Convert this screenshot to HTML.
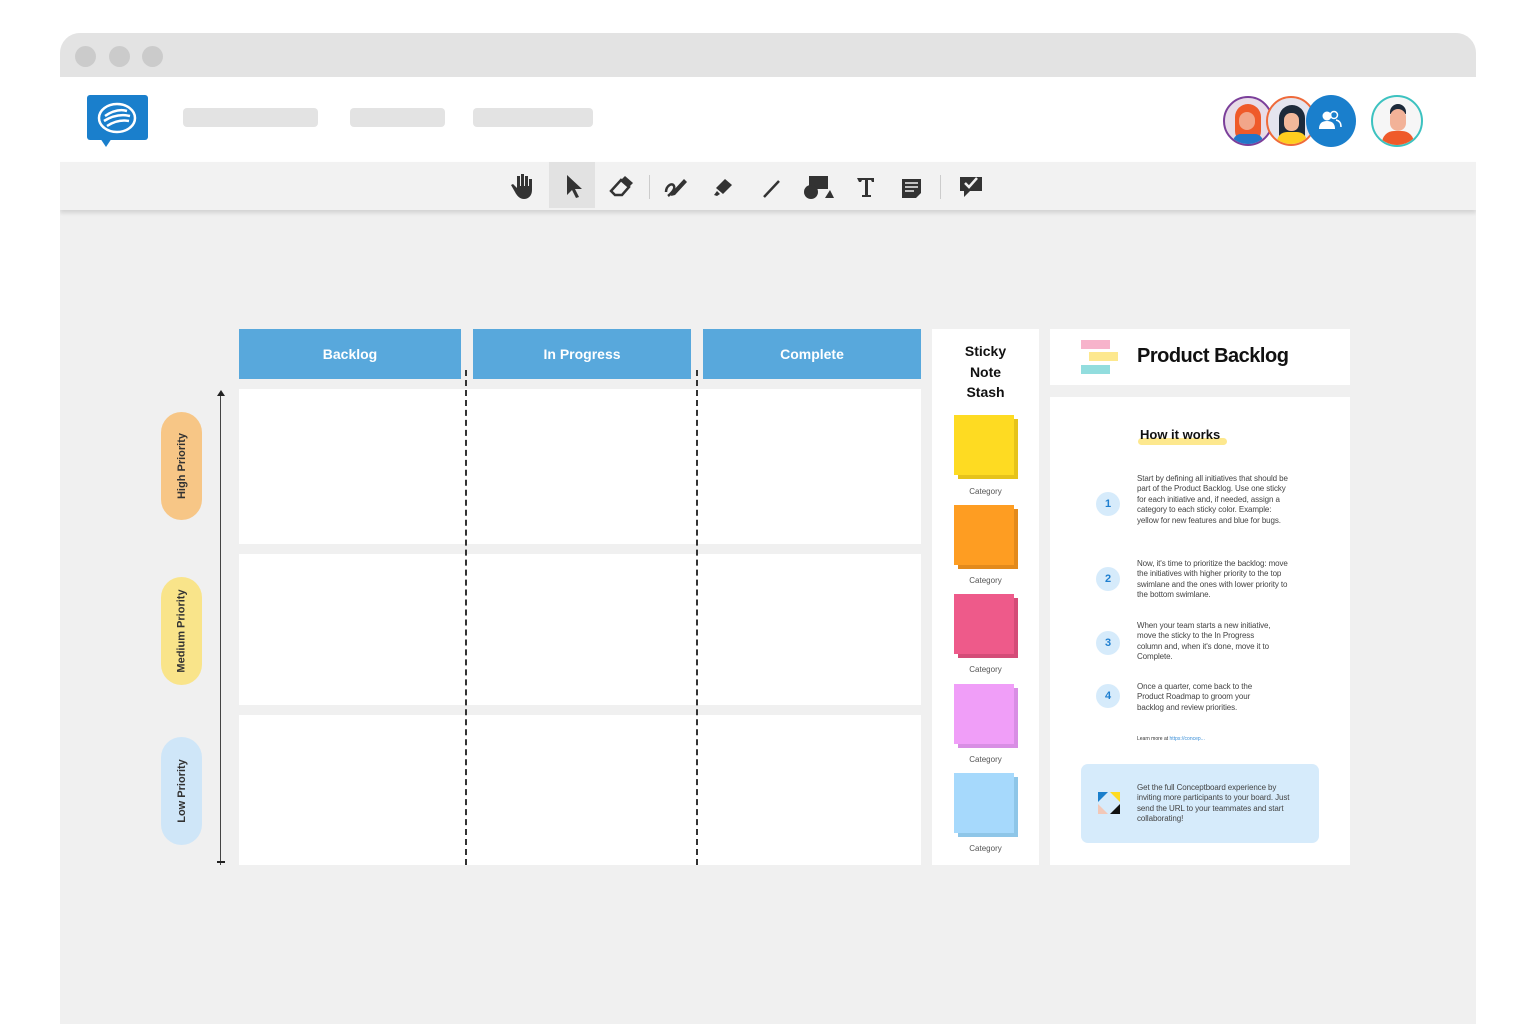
<!DOCTYPE html>
<html><head><meta charset="utf-8"><style>
*{margin:0;padding:0;box-sizing:border-box}
body{width:1536px;height:1024px;background:#fff;position:relative;overflow:hidden;font-family:"Liberation Sans",sans-serif}
.a{position:absolute}
.hand{font-family:"Comic Sans MS","Liberation Sans",sans-serif;font-weight:bold}
.col{background:#58a8dc;color:#fff;font-size:14px;display:flex;align-items:center;justify-content:center;top:329px;height:50px}
.row{background:#fff;left:239px;width:682px}
.dash{width:0;border-left:2px dashed #333;top:370px;height:495px}
.pill{left:161px;width:41px;border-radius:21px;display:flex;align-items:center;justify-content:center}
.pill span{transform:rotate(-90deg);white-space:nowrap;font-size:11px;color:#333}
.note{left:954px;width:64px;height:64px}
.note div{position:absolute}
.cat{left:932px;width:107px;text-align:center;font-size:8px;color:#555}
.num{left:1096px;width:24px;height:24px;border-radius:12px;background:#d6ebfb;color:#1f7fd0;font-size:11px;font-weight:bold;display:flex;align-items:center;justify-content:center}
.txt{left:1137px;font-size:8px;line-height:10.4px;color:#444;width:152px;letter-spacing:-0.1px}
.bar{background:#e3e3e3;border-radius:4px;top:108px;height:19px}
</style></head><body>
<div class="a" style="left:60px;top:33px;width:1416px;height:991px;background:#f0f0f0;border-radius:20px 20px 0 0;overflow:hidden">
 <div class="a" style="left:0;top:0;width:100%;height:44px;background:#e3e3e3"></div>
 <div class="a" style="left:15px;top:13px;width:21px;height:21px;border-radius:50%;background:#cbcbcb"></div>
 <div class="a" style="left:49px;top:13px;width:21px;height:21px;border-radius:50%;background:#cbcbcb"></div>
 <div class="a" style="left:82px;top:13px;width:21px;height:21px;border-radius:50%;background:#cbcbcb"></div>
 <div class="a" style="left:0;top:44px;width:100%;height:85px;background:#fff"></div>
 <div class="a" style="left:0;top:129px;width:100%;height:48px;background:#f2f2f2;box-shadow:0 3px 4px rgba(0,0,0,.12)"></div>
</div>
<div class="a" style="left:87px;top:95px;width:61px;height:45px;background:#1a7fcc;border-radius:3px"></div>
<div class="a" style="left:100px;top:138px;width:0;height:0;border-left:6px solid transparent;border-right:6px solid transparent;border-top:9px solid #1a7fcc"></div>
<svg class="a" style="left:96px;top:100px" width="42" height="36" viewBox="0 0 42 36"><ellipse cx="21" cy="18" rx="18" ry="14" fill="none" stroke="#fff" stroke-width="2.5"/><path d="M9 16 Q21 8 31 11 M8 21 Q21 13 34 16 M11 26 Q22 19 33 21" stroke="#fff" stroke-width="2.5" fill="none"/></svg>
<div class="a bar" style="left:183px;width:135px"></div>
<div class="a bar" style="left:350px;width:95px"></div>
<div class="a bar" style="left:473px;width:120px"></div>
<div class="a" style="left:1223px;top:96px;width:50px;height:50px;border-radius:50%;background:#e8dce8;border:2px solid #7b3f9a;overflow:hidden"><div class="a" style="left:10px;top:6px;width:26px;height:40px;border-radius:13px;background:#ef5a2a"></div><div class="a" style="left:14px;top:14px;width:16px;height:18px;border-radius:8px;background:#f2a68a"></div><div class="a" style="left:8px;top:36px;width:30px;height:16px;background:#2276c9;border-radius:8px 8px 0 0"></div></div>
<div class="a" style="left:1266px;top:96px;width:50px;height:50px;border-radius:50%;background:#e4e4ee;border:2px solid #ef6a3a;overflow:hidden"><div class="a" style="left:11px;top:7px;width:26px;height:34px;border-radius:13px 13px 4px 4px;background:#1d2a3a"></div><div class="a" style="left:16px;top:15px;width:15px;height:18px;border-radius:7px;background:#f2b89a"></div><div class="a" style="left:9px;top:34px;width:30px;height:16px;background:#ffcd1f;border-radius:10px 10px 0 0"></div></div>
<div class="a" style="left:1306px;top:95px;width:50px;height:52px;border-radius:50%;background:#1a7fcc"></div>
<svg class="a" style="left:1317px;top:109px" width="26" height="24" viewBox="0 0 26 24"><circle cx="10" cy="7" r="4.5" fill="#fff"/><path d="M2 20 Q2 12 10 12 Q18 12 18 20Z" fill="#fff"/><circle cx="17" cy="6" r="3.5" fill="none" stroke="#fff" stroke-width="1.5"/><path d="M19 11 Q24 12 24 18" stroke="#fff" stroke-width="1.5" fill="none"/></svg>
<div class="a" style="left:1371px;top:95px;width:52px;height:52px;border-radius:50%;background:#f6f6f6;border:2px solid #3cc2c0;overflow:hidden"><div class="a" style="left:17px;top:7px;width:16px;height:10px;border-radius:8px 8px 0 0;background:#1d2a3a"></div><div class="a" style="left:17px;top:12px;width:16px;height:22px;border-radius:8px;background:#f2b298"></div><div class="a" style="left:9px;top:34px;width:32px;height:18px;background:#ef5a2a;border-radius:12px 12px 0 0"></div></div>
<div class="a" style="left:549px;top:162px;width:46px;height:46px;background:#e2e2e2"></div>
<div class="a" style="left:649px;top:175px;width:1px;height:24px;background:#ccc"></div>
<div class="a" style="left:940px;top:175px;width:1px;height:24px;background:#ccc"></div>
<svg class="a" style="left:500px;top:170px" width="500" height="34" viewBox="0 0 500 34" fill="#333">
 <path d="M17 10v-4h3v10h1V4h3v12h1V6h3v10h1V9h3v11c0 6-4 9-8 9s-7-3-9-7l-4-7 2-1 4 4V10z"/>
 <path d="M67 5v20l5-5 4 8 3-1-4-8h7z"/>
 <path d="M111 21l10-11 8 7-7 8h-7z" fill="none" stroke="#333" stroke-width="2.5"/><path d="M121 10l4-4 8 7-4 4z"/>
 <path d="M166 22c0-6 6-10 8-6s-6 10-6 10" fill="none" stroke="#333" stroke-width="2.5"/><path d="M172 22l12-13 3 3-12 13-4 1z"/>
 <path d="M216 18l9-9 7 6-9 9z"/><path d="M214 25l3-4 3 3-3 2z"/>
 <path d="M264 27l15-16" stroke="#333" stroke-width="2.5"/>
 <rect x="309" y="6" width="19" height="13"/><circle cx="311" cy="22" r="7"/><path d="M325 28l5-8 4 8z"/>
 <path d="M357 8h17v4h-2l-1-2h-3v15h3v2h-9v-2h3V10h-3l-1 2h-2z"/>
 <path d="M402 9h19v14l-5 5h-14z"/><path d="M405 13h13M405 17h13M405 21h9" stroke="#f2f2f2" stroke-width="1.5"/>
 <path d="M460 7h22v14h-12l-6 6v-6h-4z"/><path d="M465 13l4 4 8-9" stroke="#f2f2f2" stroke-width="2.5" fill="none"/>
</svg>
<div class="a col hand" style="left:239px;width:222px">Backlog</div>
<div class="a col hand" style="left:473px;width:218px">In Progress</div>
<div class="a col hand" style="left:703px;width:218px">Complete</div>
<div class="a row" style="top:389px;height:155px"></div>
<div class="a row" style="top:554px;height:151px"></div>
<div class="a row" style="top:715px;height:150px"></div>
<div class="a dash" style="left:465px"></div>
<div class="a dash" style="left:696px"></div>
<div class="a" style="left:220px;top:392px;width:1px;height:473px;background:#444"></div>
<div class="a" style="left:217px;top:390px;border-left:4px solid transparent;border-right:4px solid transparent;border-bottom:6px solid #222"></div>
<div class="a" style="left:217px;top:861px;width:8px;height:2px;background:#222"></div>
<div class="a pill hand" style="top:412px;height:108px;background:#f7c686"><span>High Priority</span></div>
<div class="a pill hand" style="top:577px;height:108px;background:#f9e48a"><span>Medium Priority</span></div>
<div class="a pill hand" style="top:737px;height:108px;background:#cfe6f8"><span>Low Priority</span></div>
<div class="a" style="left:932px;top:329px;width:107px;height:536px;background:#fff"></div>
<div class="a hand" style="left:932px;top:341px;width:107px;text-align:center;font-size:14px;line-height:20.5px;color:#111">Sticky<br>Note<br>Stash</div>
<div class="a note" style="top:415px"><div style="left:4px;top:4px;width:60px;height:60px;background:#e6c31a"></div><div style="left:0;top:0;width:60px;height:60px;background:#fedb22"></div></div>
<div class="a cat" style="top:487px">Category</div>
<div class="a note" style="top:505px"><div style="left:4px;top:4px;width:60px;height:60px;background:#e38a1c"></div><div style="left:0;top:0;width:60px;height:60px;background:#fe9d22"></div></div>
<div class="a cat" style="top:576px">Category</div>
<div class="a note" style="top:594px"><div style="left:4px;top:4px;width:60px;height:60px;background:#d44c78"></div><div style="left:0;top:0;width:60px;height:60px;background:#ee5a8a"></div></div>
<div class="a cat" style="top:665px">Category</div>
<div class="a note" style="top:684px"><div style="left:4px;top:4px;width:60px;height:60px;background:#d88ee4"></div><div style="left:0;top:0;width:60px;height:60px;background:#f09ef8"></div></div>
<div class="a cat" style="top:755px">Category</div>
<div class="a note" style="top:773px"><div style="left:4px;top:4px;width:60px;height:60px;background:#8ec6e8"></div><div style="left:0;top:0;width:60px;height:60px;background:#a6d9fc"></div></div>
<div class="a cat" style="top:844px">Category</div>
<div class="a" style="left:1050px;top:329px;width:300px;height:56px;background:#fff"></div>
<div class="a" style="left:1081px;top:340px;width:29px;height:9px;background:#f7b3cb"></div>
<div class="a" style="left:1089px;top:352px;width:29px;height:9px;background:#fde88e"></div>
<div class="a" style="left:1081px;top:365px;width:29px;height:9px;background:#92ddde"></div>
<div class="a hand" style="left:1137px;top:345px;font-size:20px;color:#111;letter-spacing:-0.5px">Product Backlog</div>
<div class="a" style="left:1050px;top:397px;width:300px;height:468px;background:#fff"></div>
<div class="a" style="left:1138px;top:438px;width:89px;height:7px;background:#fde88e;border-radius:4px"></div>
<div class="a hand" style="left:1140px;top:427px;font-size:13px;color:#111">How it works</div>
<div class="a num" style="top:492px">1</div>
<div class="a txt" style="top:474px">Start by defining all initiatives that should be part of the Product Backlog. Use one sticky for each initiative and, if needed, assign a category to each sticky color. Example: yellow for new features and blue for bugs.</div>
<div class="a num" style="top:567px">2</div>
<div class="a txt" style="top:559px">Now, it's time to prioritize the backlog: move the initiatives with higher priority to the top swimlane and the ones with lower priority to the bottom swimlane.</div>
<div class="a num" style="top:631px">3</div>
<div class="a txt" style="top:621px;width:135px">When your team starts a new initiative, move the sticky to the In Progress column and, when it's done, move it to Complete.</div>
<div class="a num" style="top:684px">4</div>
<div class="a txt" style="top:682px;width:135px">Once a quarter, come back to the Product Roadmap to groom your backlog and review priorities.</div>
<div class="a" style="left:1137px;top:736px;font-size:5px;color:#333">Learn more at <span style="color:#3a8fd8">https://concep...</span></div>
<div class="a" style="left:1081px;top:764px;width:238px;height:79px;background:#d6ebfb;border-radius:7px"></div>
<svg class="a" style="left:1098px;top:792px" width="22" height="22" viewBox="0 0 22 22"><path d="M0 0h10L0 10z" fill="#1a7fcc"/><path d="M12 0h10v10z" fill="#fedb22"/><path d="M0 12l10 10H0z" fill="#f2c8b8"/><path d="M22 12v10H12z" fill="#111"/></svg>
<div class="a txt" style="left:1137px;top:783px;width:160px">Get the full Conceptboard experience by inviting more participants to your board. Just send the URL to your teammates and start collaborating!</div>
</body></html>
